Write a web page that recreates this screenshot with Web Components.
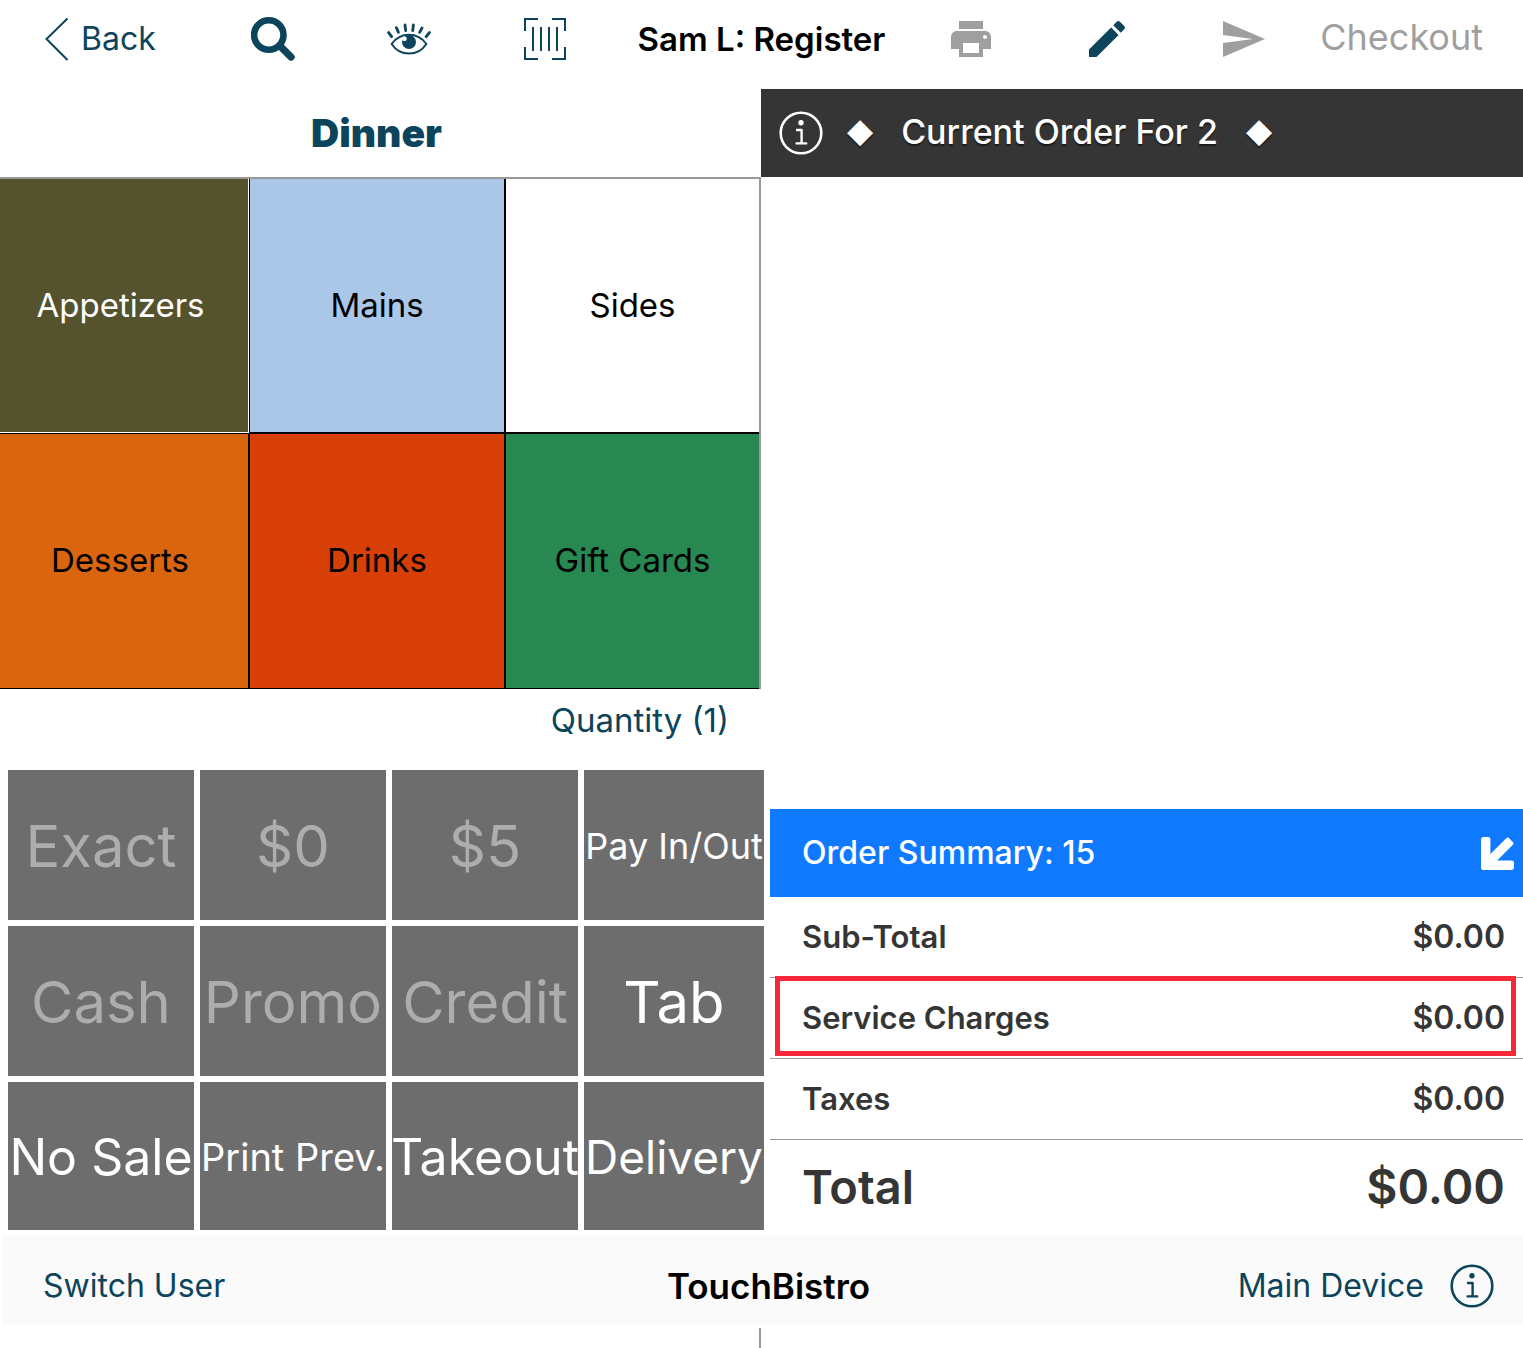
<!DOCTYPE html>
<html lang="en">
<head>
<meta charset="utf-8">
<meta name="viewport" content="width=device-width, initial-scale=1">
<title>TouchBistro</title>
<style>
  body {
    margin: 0;
    background: #fff;
    font-family: Inter, "Liberation Sans", sans-serif;
    --navy: #0c445c;
    --muted: #9f9f9f;
    --ink: #353535;
    --line: #999;
  }
</style>
</head>
<body>
<register-app></register-app>

<script>
const html = String.raw;

// Shared reset for every real button inside a shadow root.
const buttonReset = html`
  button {
    margin: 0;
    padding: 0;
    border: 0;
    background: none;
    color: inherit;
    font: inherit;
    cursor: pointer;
  }
  button:disabled { cursor: default; }
`;

const icons = {
  back: html`<svg width="24" height="44" viewBox="0 0 24 44" fill="none" stroke="currentColor" stroke-width="2">
    <path d="M22.5 1.5L1.5 22l21 21" />
  </svg>`,
  search: html`<svg width="44" height="44" viewBox="0 0 44 44" fill="none" stroke="currentColor">
    <circle cx="17.8" cy="18" r="14.7" stroke-width="6.6" />
    <path d="M29 29l11 11" stroke-width="7.4" stroke-linecap="round" />
  </svg>`,
  eye: html`<svg width="44" height="44" viewBox="0 0 44 44" fill="none" stroke="currentColor" stroke-linecap="round">
    <path d="M4.6 27C9 21 15 17.8 22 17.8S35 21 39.4 27C35 33.6 29 36.6 22 36.6S9 33.6 4.6 27z" stroke-width="2" stroke-linejoin="round" />
    <circle cx="22" cy="25" r="7" fill="currentColor" stroke="none" />
    <circle cx="17.4" cy="21.8" r="2.4" fill="#fff" stroke="none" />
    <path d="M1.6 15.6l3 4M9.4 10.6l2 4.6M18 8l.7 5.6M26.4 8l-.7 5.6M35 11l-2.4 4.4M42.4 15.6l-3.2 4" stroke-width="2.8" />
  </svg>`,
  barcode: html`<svg width="44" height="44" viewBox="0 0 44 44" fill="none" stroke="currentColor" stroke-width="2">
    <path d="M2 14V2h13M29 2h13v12M42 30v12H29M15 42H2V30" />
    <path d="M10 10v24M18 10v24M26 10v24M34 10v24" />
  </svg>`,
  print: html`<svg width="48" height="48" viewBox="0 0 24 24" fill="currentColor">
    <path d="M19 8H5c-1.66 0-3 1.34-3 3v6h4v4h12v-4h4v-6c0-1.66-1.34-3-3-3zm-3 11H8v-5h8v5zm3-7c-.55 0-1-.45-1-1s.45-1 1-1 1 .45 1 1-.45 1-1 1zm-1-9H6v4h12V3z" />
  </svg>`,
  edit: html`<svg width="48" height="48" viewBox="0 0 24 24" fill="currentColor">
    <path d="M3 17.25V21h3.75L17.81 9.94l-3.75-3.75L3 17.25zM20.71 7.04a1 1 0 0 0 0-1.41l-2.34-2.34a1 1 0 0 0-1.41 0l-1.83 1.83 3.75 3.75 1.83-1.83z" />
  </svg>`,
  send: html`<svg width="48" height="48" viewBox="0 0 24 24" fill="currentColor">
    <path d="M2.01 21L23 12 2.01 3 2 10l15 2-15 2z" />
  </svg>`,
  info: html`<svg width="44" height="44" viewBox="0 0 44 44" fill="none" stroke="currentColor" stroke-width="2.6">
    <circle cx="22" cy="22" r="20.3" />
    <circle cx="22" cy="11.8" r="2.7" fill="currentColor" stroke="none" />
    <path d="M18 19h4.6v13.4M17.6 32.4h9.6" stroke-width="2.4" stroke-linecap="round" stroke-linejoin="round" />
  </svg>`,
  collapse: html`<svg width="34" height="34" viewBox="0 -1 34 34" fill="currentColor">
    <rect x="0" y="0" width="9.4" height="33" rx="2.4" />
    <rect x="0" y="23.6" width="33" height="9.4" rx="2.4" />
    <rect x="0" y="-4.7" width="36" height="9.4" rx="2" transform="translate(4.5 28.5) rotate(-45)" />
  </svg>`
};

class PosIcon extends HTMLElement {
  constructor() {
    super();
    this.attachShadow({ mode: 'open' });
  }

  connectedCallback() {
    this.shadowRoot.innerHTML = html`
      <style>
        :host { display: block; flex: none; }
        svg { display: block; }
      </style>
      ${icons[this.getAttribute('name')]}
    `;
  }
}

class TopBar extends HTMLElement {
  constructor() {
    super();
    this.attachShadow({ mode: 'open' });
    this.shadowRoot.innerHTML = html`
      <style>
        ${buttonReset}
        :host {
          display: grid;
          grid-template-columns: 1fr auto 1fr;
          align-items: center;
          height: 78px;
          padding: 0 40px 11px;
          color: var(--navy);
          font-size: 32px;
          line-height: 40px;
        }
        nav, .actions, .tools { display: flex; align-items: center; }
        nav { gap: 92px; padding: 0 71px 0 5px; }
        .actions { justify-content: space-between; padding-left: 62px; }
        .tools { gap: 88px; }
        .back {
          display: flex;
          align-items: center;
          gap: 12px;
          margin-right: auto;
        }
        h1 {
          margin: 0;
          color: #000;
          font-size: 33px;
          font-weight: 600;
          white-space: nowrap;
        }
        button:disabled { color: var(--muted); }
        .checkout { padding-bottom: 4px; font-size: 36px; }
      </style>
      <nav>
        <button class="back"><pos-icon name="back"></pos-icon>Back</button>
        <button aria-label="Search"><pos-icon name="search"></pos-icon></button>
        <button aria-label="View"><pos-icon name="eye"></pos-icon></button>
        <button aria-label="Scan barcode"><pos-icon name="barcode"></pos-icon></button>
      </nav>
      <h1>Sam L: Register</h1>
      <div class="actions">
        <div class="tools">
          <button aria-label="Print" disabled><pos-icon name="print"></pos-icon></button>
          <button aria-label="Edit"><pos-icon name="edit"></pos-icon></button>
          <button aria-label="Send" disabled><pos-icon name="send"></pos-icon></button>
        </div>
        <button class="checkout" disabled>Checkout</button>
      </div>
    `;
  }
}

class MenuCategory extends HTMLElement {
  constructor() {
    super();
    this.attachShadow({ mode: 'open' });
    this.shadowRoot.innerHTML = html`
      <style>
        ${buttonReset}
        :host {
          display: grid;
          box-sizing: border-box;
          padding-bottom: 2px;
          background: var(--tile, #fff);
          color: #000;
          border: 0 solid #000;
        }
        :host([light]) { color: #fff; }
        button { font-size: 33px; line-height: 40px; }
      </style>
      <button><slot></slot></button>
    `;
  }
}

class MenuPanel extends HTMLElement {
  constructor() {
    super();
    this.attachShadow({ mode: 'open' });
    this.shadowRoot.innerHTML = html`
      <style>
        ${buttonReset}
        :host { display: block; }
        h2 {
          margin: 0;
          padding-right: 8px;
          color: var(--navy);
          font-size: 39px;
          font-weight: 900;
          line-height: 87px;
          padding-bottom: 1px;
          text-align: center;
        }
        .grid {
          display: grid;
          grid-template-columns: 250fr 256fr 253fr;
          grid-auto-rows: 255px;
          border-top: 2px solid var(--line);
          border-right: 2px solid var(--line);
        }
        menu-category { border-width: 0 2px 2px 0; }
        menu-category:nth-child(3n + 1) { padding-right: 8px; }
        menu-category:nth-child(3n) { border-right-width: 0; }
        menu-category:nth-child(n + 4) { border-bottom-width: 1px; }
        menu-category[light] {
          border-width: 0 1px 1px 0;
          box-shadow: inset -1px -1px #fff;
        }
        .quantity {
          display: flex;
          justify-content: flex-end;
          height: 62px;
          padding: 0 32px 19px;
          color: var(--navy);
          font-size: 33px;
        }
      </style>
      <h2>Dinner</h2>
      <div class="grid">
        <menu-category light style="--tile: #55532d">Appetizers</menu-category>
        <menu-category style="--tile: #aac7e7">Mains</menu-category>
        <menu-category>Sides</menu-category>
        <menu-category style="--tile: #d9650f">Desserts</menu-category>
        <menu-category style="--tile: #d83f06">Drinks</menu-category>
        <menu-category style="--tile: #288852">Gift Cards</menu-category>
      </div>
      <div class="quantity"><button>Quantity (1)</button></div>
    `;
  }
}

const keys = [
  { label: 'Exact', size: 'xl', off: true },
  { label: '$0', size: 'xl', off: true },
  { label: '$5', size: 'xl', off: true },
  { label: 'Pay In/Out', size: 's' },
  { label: 'Cash', size: 'xl', off: true },
  { label: 'Promo', size: 'xl', off: true },
  { label: 'Credit', size: 'xl', off: true },
  { label: 'Tab', size: 'xl' },
  { label: 'No Sale', size: 'l' },
  { label: 'Print Prev.', size: 'm' },
  { label: 'Takeout', size: 'l' },
  { label: 'Delivery', size: 'ml' }
];

class PaymentKeys extends HTMLElement {
  constructor() {
    super();
    this.attachShadow({ mode: 'open' });
    this.shadowRoot.innerHTML = html`
      <style>
        ${buttonReset}
        :host {
          display: grid;
          grid-template-columns: 186fr 186fr 186fr 180fr;
          grid-template-rows: 150px 150px 148px;
          gap: 6px;
          margin: 0 -3px 6px 8px;
        }
        button {
          display: flex;
          align-items: center;
          justify-content: center;
          min-width: 0;
          padding-top: 2px;
          background: #6d6d6d;
          color: #fff;
          white-space: nowrap;
        }
        button:disabled { color: #adadad; }
        .xl { font-size: 58px; }
        .l { font-size: 50px; }
        .ml { font-size: 46px; }
        .m { font-size: 38px; }
        .s { font-size: 36px; }
      </style>
      ${keys.map(k => `<button class="${k.size}"${k.off ? ' disabled' : ''}>${k.label}</button>`).join('')}
    `;
  }
}

class OrderHeader extends HTMLElement {
  constructor() {
    super();
    this.attachShadow({ mode: 'open' });
    this.shadowRoot.innerHTML = html`
      <style>
        ${buttonReset}
        :host {
          display: flex;
          align-items: center;
          height: 88px;
          padding-left: 18px;
          background: var(--ink);
          color: #fff;
        }
        h2 {
          display: flex;
          align-items: center;
          gap: 28px;
          margin: 0 0 0 24px;
          font-size: 34px;
          font-weight: 500;
          line-height: 40px;
          padding-bottom: 2px;
          text-shadow: 0 2px 1px rgba(0, 0, 0, 0.5);
          white-space: nowrap;
        }
        .mark {
          padding-bottom: 4px;
          font-family: "DejaVu Sans", sans-serif;
          font-weight: 400;
        }
      </style>
      <button aria-label="Order details"><pos-icon name="info"></pos-icon></button>
      <h2><span class="mark">◆</span><slot></slot><span class="mark">◆</span></h2>
    `;
  }
}

class OrderSummary extends HTMLElement {
  constructor() {
    super();
    this.attachShadow({ mode: 'open' });
    this.shadowRoot.innerHTML = html`
      <style>
        ${buttonReset}
        :host { display: block; color: var(--ink); }
        header {
          display: flex;
          align-items: center;
          justify-content: space-between;
          height: 88px;
          padding: 0 8px 0 32px;
          background: #0f7aff;
          color: #fff;
        }
        h3 { margin: 0; padding-bottom: 2px; font-size: 32px; font-weight: 500; }
        table {
          width: 100%;
          border-collapse: separate;
          border-spacing: 0;
          font-size: 32px;
        }
        tr { position: relative; }
        th, td {
          box-sizing: border-box;
          height: 81px;
          padding: 0 18px 2px 32px;
          border-bottom: 1px solid var(--line);
          font-weight: 600;
          text-align: left;
        }
        th { font-size: 31px; }
        td { text-align: right; }
        .total th, .total td {
          height: 96px;
          padding-bottom: 4px;
          border-bottom: 0;
          font-size: 48px;
        }
        .total th { font-size: 47px; }
        /* Red callout drawn over the row's own lines */
        .flagged th::after {
          content: "";
          position: absolute;
          inset: -2px 7px 3px 5px;
          border: 5px solid #f52938;
        }
      </style>
      <header>
        <h3>Order Summary: 15</h3>
        <button aria-label="Collapse summary"><pos-icon name="collapse"></pos-icon></button>
      </header>
      <table>
        <tr><th scope="row">Sub-Total</th><td>$0.00</td></tr>
        <tr class="flagged"><th scope="row">Service Charges</th><td>$0.00</td></tr>
        <tr><th scope="row">Taxes</th><td>$0.00</td></tr>
        <tr class="total"><th scope="row">Total</th><td>$0.00</td></tr>
      </table>
    `;
  }
}

class StatusBar extends HTMLElement {
  constructor() {
    super();
    this.attachShadow({ mode: 'open' });
    this.shadowRoot.innerHTML = html`
      <style>
        ${buttonReset}
        :host {
          display: grid;
          grid-template-columns: 1fr auto 1fr;
          align-items: center;
          height: 76px;
          margin-left: 2px;
          padding: 12px 29px 0 41px;
          background: #fafafa;
          color: var(--navy);
          font-size: 32px;
          line-height: 40px;
        }
        button { justify-self: start; }
        strong { color: #000; font-size: 35px; font-weight: 600; }
        .device {
          display: flex;
          align-items: center;
          justify-self: end;
          gap: 26px;
        }
      </style>
      <button>Switch User</button>
      <strong>TouchBistro</strong>
      <button class="device">Main Device<pos-icon name="info"></pos-icon></button>
    `;
  }
}

class RegisterApp extends HTMLElement {
  constructor() {
    super();
    this.attachShadow({ mode: 'open' });
    this.shadowRoot.innerHTML = html`
      <style>
        :host {
          display: flex;
          flex-direction: column;
          min-height: 100vh;
        }
        main {
          display: grid;
          grid-template-columns: 761fr 762fr;
        }
        .menu, .order { min-width: 0; }
        .order { display: flex; flex-direction: column; }
        order-summary { margin: auto 0 0 9px; }
        /* The pane divider shows again under the status bar */
        .divider {
          display: grid;
          grid-template-columns: 761fr 762fr;
          flex: 1;
          min-height: 20px;
          margin-top: 4px;
        }
        .divider::before { content: ""; border-right: 2px solid var(--line); }
      </style>
      <top-bar></top-bar>
      <main>
        <section class="menu">
          <menu-panel></menu-panel>
          <payment-keys></payment-keys>
        </section>
        <section class="order">
          <order-header>Current Order For 2</order-header>
          <order-summary></order-summary>
        </section>
      </main>
      <status-bar></status-bar>
      <div class="divider"></div>
    `;
  }
}

customElements.define('pos-icon', PosIcon);
customElements.define('top-bar', TopBar);
customElements.define('menu-category', MenuCategory);
customElements.define('menu-panel', MenuPanel);
customElements.define('payment-keys', PaymentKeys);
customElements.define('order-header', OrderHeader);
customElements.define('order-summary', OrderSummary);
customElements.define('status-bar', StatusBar);
customElements.define('register-app', RegisterApp);
</script>
</body>
</html>
